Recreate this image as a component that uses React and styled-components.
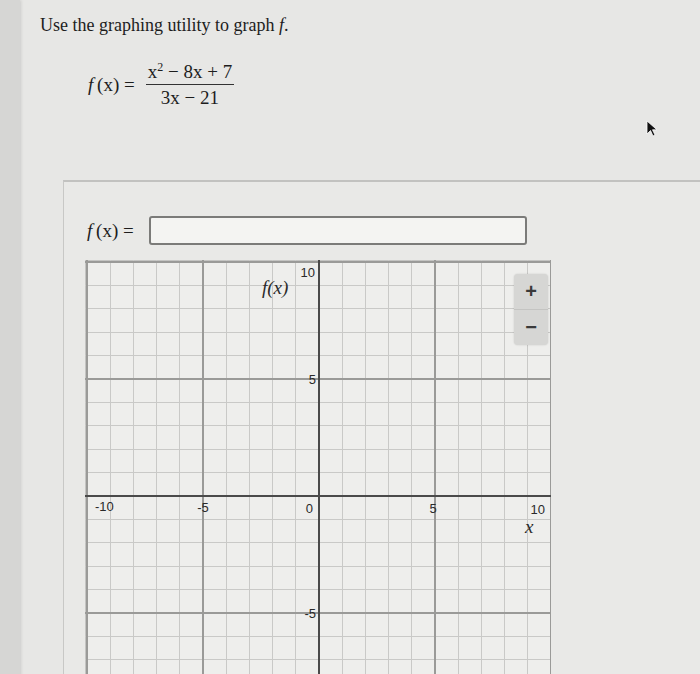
import React from 'react';
import styled, {createGlobalStyle} from "styled-components";

const UNIT_X = 23.2;
const UNIT_Y = 23.4;
const GRID_W = 466;
const GRID_H = 470;
const ORIGIN_X = 234;
const ORIGIN_Y = 236;

const GlobalStyle = createGlobalStyle`
    html, body {
        margin: 0;
        padding: 0;
        background: #e7e7e5;
        overflow: hidden;
    }
    body {
        font-family: "Liberation Serif", "Times New Roman", serif;
        color: #1d1d1d;
    }
`;

export default function App() {
    return <Page>
        <GlobalStyle/>
        <Edge/>
        <Content>
            <Title>Use the graphing utility to graph <i>f</i>.</Title>
            <Formula>
                <Lhs><i>f</i>&thinsp;(x) =</Lhs>
                <Fraction>
                    <Num>x<sup>2</sup> − 8x + 7</Num>
                    <Den>3x − 21</Den>
                </Fraction>
            </Formula>
            <Panel>
                <AnswerRow>
                    <Lhs><i>f</i>&thinsp;(x) =</Lhs>
                    <Input/>
                </AnswerRow>
                <GraphWrap>
                    <Grid/>
                    <ZoomBox>
                        <ZoomButton>+</ZoomButton>
                        <ZoomButton>−</ZoomButton>
                    </ZoomBox>
                </GraphWrap>
            </Panel>
        </Content>
        <Cursor viewBox="0 0 12 18" width="12" height="18">
            <path d="M1 1 L1 14 L4.5 10.5 L7 16 L9 15 L6.5 9.8 L11 9.8 Z" fill="#111" stroke="#fff" strokeWidth="0.8"/>
        </Cursor>
    </Page>
}

function Grid() {
    const minor = [], major = [], axes = [];
    for (let i = -10; i <= 10; i++) {
        const x = ORIGIN_X + i * UNIT_X;
        const line = <line key={"v" + i} x1={x} x2={x} y1={0} y2={GRID_H}/>;
        (i === 0 ? axes : i % 5 === 0 ? major : minor).push(line);
    }
    for (let j = -9; j <= 10; j++) {
        const y = ORIGIN_Y - j * UNIT_Y;
        const line = <line key={"h" + j} x1={0} x2={GRID_W} y1={y} y2={y}/>;
        (j === 0 ? axes : j % 5 === 0 ? major : minor).push(line);
    }
    return <GridSvg width={GRID_W} height={GRID_H} viewBox={`0 0 ${GRID_W} ${GRID_H}`}>
        <rect x="0.5" y="0.5" width={GRID_W - 1} height={GRID_H} fill="#eeeeec" stroke="#c4c4c2"/>
        <g className="minor">{minor}</g>
        <g className="major">{major}</g>
        <g className="axis">{axes}</g>
        <g className="num">
            <text x={ORIGIN_X - 4} y={17} textAnchor="end">10</text>
            <text x={ORIGIN_X - 3} y={ORIGIN_Y - 5 * UNIT_Y + 5} textAnchor="end">5</text>
            <text x={ORIGIN_X - 3} y={ORIGIN_Y + 5 * UNIT_Y + 5} textAnchor="end">-5</text>
            <text x={ORIGIN_X - 6} y={ORIGIN_Y + 17} textAnchor="end">0</text>
            <text x={10} y={ORIGIN_Y + 15}>-10</text>
            <text x={ORIGIN_X - 5 * UNIT_X} y={ORIGIN_Y + 16} textAnchor="middle">-5</text>
            <text x={ORIGIN_X + 5 * UNIT_X - 2} y={ORIGIN_Y + 17} textAnchor="middle">5</text>
            <text x={GRID_W - 6} y={ORIGIN_Y + 18} textAnchor="end">10</text>
        </g>
        <text className="var" x={GRID_W - 26} y={ORIGIN_Y + 37}>x</text>
        <text className="var" x={ORIGIN_X - 57} y={34}>f(x)</text>
    </GridSvg>
}

const Page = styled.div`
    display: flex;
    min-height: 674px;
    position: relative;
`;

const Edge = styled.div`
    width: 20px;
    flex-shrink: 0;
    background: #d6d6d4;
    box-shadow: 1px 0 3px rgba(0, 0, 0, 0.12);
`;

const Content = styled.div`
    flex: 1;
    padding: 12px 0 0 20px;
`;

const Title = styled.div`
    font-size: 18px;
    line-height: 26px;
    i { font-style: italic; }
`;

const Formula = styled.div`
    display: flex;
    align-items: center;
    gap: 11px;
    margin: 23px 0 0 48px;
`;

const Lhs = styled.div`
    font-size: 19px;
    white-space: nowrap;
`;

const Fraction = styled.div`
    display: flex;
    flex-direction: column;
    align-items: center;
    font-size: 19px;
`;

const Num = styled.div`
    padding: 0 2px 2px;
    border-bottom: 1px solid #333;
    line-height: 21px;
    sup { font-size: 12px; line-height: 0; }
`;

const Den = styled.div`
    padding-top: 2px;
    line-height: 21px;
`;

const Panel = styled.div`
    margin: 72px 0 0 23px;
    border-top: 2px solid #c2c2c0;
    border-left: 1px solid #c8c8c6;
    background: #e9e9e7;
    padding: 34px 0 0 23px;
    height: 500px;
`;

const AnswerRow = styled.div`
    display: flex;
    align-items: center;
    gap: 15px;
`;

const Input = styled.div`
    width: 374px;
    height: 25px;
    border: 2px solid #7b7b79;
    border-radius: 3px;
    background: #f4f4f2;
`;

const GraphWrap = styled.div`
    position: relative;
    width: ${GRID_W}px;
    margin: 15px 0 0 -2px;
`;

const GridSvg = styled.svg`
    display: block;
    line {
        shape-rendering: crispEdges;
    }
    .minor line { stroke: #c9c9c7; stroke-width: 1.3; }
    .major line { stroke: #9a9a98; stroke-width: 1.3; }
    .axis line { stroke: #4a4a4a; stroke-width: 1.8; }
    .num text {
        font-family: "Liberation Sans", Arial, sans-serif;
        font-size: 13px;
        fill: #2a2a2a;
    }
    .var {
        font-family: "Liberation Serif", "Times New Roman", serif;
        font-style: italic;
        font-size: 19px;
        fill: #2a2a2a;
    }
`;

const ZoomBox = styled.div`
    position: absolute;
    top: 14px;
    left: 429px;
    width: 34px;
    display: flex;
    flex-direction: column;
    background: #d6d6d4;
    border-radius: 4px;
    box-shadow: 0 0 2px rgba(0, 0, 0, 0.15);
`;

const ZoomButton = styled.div`
    height: 35px;
    display: flex;
    align-items: center;
    justify-content: center;
    font-family: "Liberation Sans", Arial, sans-serif;
    font-size: 20px;
    font-weight: bold;
    color: #3a3a3a;
    & + & { border-top: 1px solid #c4c4c2; }
`;

const Cursor = styled.svg`
    position: absolute;
    left: 646px;
    top: 120px;
`;
